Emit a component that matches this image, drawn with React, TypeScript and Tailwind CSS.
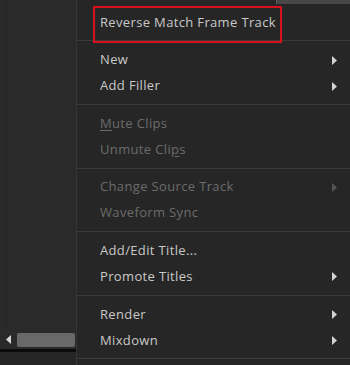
import React from "react"

type Item = { label: React.ReactNode; disabled?: boolean; sub?: boolean } | "sep"

const items: Item[] = [
    { label: "Reverse Match Frame Track" },
    "sep",
    { label: "New", sub: true },
    { label: "Add Filler", sub: true },
    "sep",
    { label: <><span className="underline underline-offset-2">M</span>ute Clips</>, disabled: true },
    { label: <>Unmute Cli<span className="underline underline-offset-2">p</span>s</>, disabled: true },
    "sep",
    { label: "Change Source Track", disabled: true, sub: true },
    { label: "Waveform Sync", disabled: true },
    "sep",
    { label: "Add/Edit Title..." },
    { label: "Promote Titles", sub: true },
    "sep",
    { label: "Render", sub: true },
    { label: "Mixdown", sub: true },
    "sep",
]

function Arrow({ dim }: { dim?: boolean }) {
    return (
        <svg width="5" height="9" viewBox="0 0 5 9" className={dim ? "text-[#555555]" : "text-[#d2d2d2]"}>
            <path d="M0 0 L5 4.5 L0 9 Z" fill="currentColor" />
        </svg>
    )
}

export default function App() {
    return (
        <div
            className="relative w-[350px] h-[365px] overflow-hidden bg-[#2a2a2a] flex"
            style={{ fontFamily: '"Open Sans", "DejaVu Sans", sans-serif' }}
        >
            {/* timeline side */}
            <div className="w-[76px] flex flex-col">
                <div className="h-[332px] ml-[6px] border-l border-[#252525]" />
                <div className="h-[15px] flex items-center">
                    <div className="w-[17px] flex justify-center">
                        <svg width="5" height="9" viewBox="0 0 5 9" className="text-[#d8d8d8]">
                            <path d="M5 0 L0 4.5 L5 9 Z" fill="currentColor" />
                        </svg>
                    </div>
                    <div className="h-[14px] flex-1 mr-[1px] bg-[#696969] rounded-[2px]" />
                </div>
                <div className="h-[2px]" />
                <div className="h-[3px] bg-[#0c0c0c]" />
                <div className="flex-1 bg-[#262626]" />
            </div>

            {/* context menu */}
            <div className="flex-1 flex flex-col bg-[#262626] border-l border-[#363636]">
                <div className="h-[4px] flex">
                    <div className="w-[199px]" />
                    <div className="flex-1 bg-[#474747] border-l border-[#5a5a5a]" />
                </div>
                <div className="h-[6px]" />
                {items.map((it, i) =>
                    it === "sep" ? (
                        <div key={i} className="h-[12px] pt-[5px]">
                            <div className="h-px bg-[#3b3b3b]" />
                        </div>
                    ) : (
                        <div
                            key={i}
                            className={`h-[26px] shrink-0 flex items-center justify-between pl-[23px] pr-[13px] text-[13px] ${
                                it.disabled ? "text-[#6c6c6c]" : "text-[#c9c9c9]"
                            }`}
                        >
                            <span className="tracking-[0.35px]">{it.label}</span>
                            {it.sub && <Arrow dim={it.disabled} />}
                        </div>
                    )
                )}
            </div>

            {/* annotation */}
            <div className="absolute left-[93px] top-[6px] w-[189px] h-[37px] border-2 border-[#d5111b]" />
        </div>
    )
}
